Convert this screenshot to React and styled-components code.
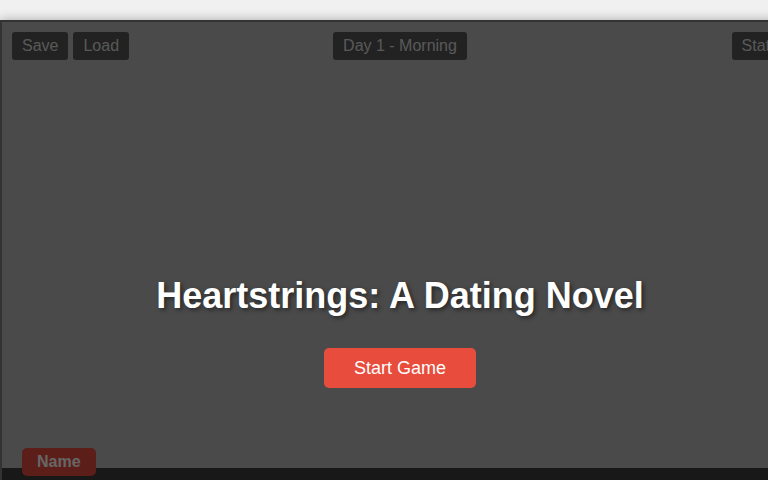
import React from 'react'
import styled, { createGlobalStyle } from 'styled-components'

const GlobalStyle = createGlobalStyle`
  html, body {
    margin: 0;
    padding: 0;
    background: #f0f0f0;
    font-family: "Liberation Sans", Arial, sans-serif;
    overflow: hidden;
  }
`

const Game = styled.div`
  box-sizing: border-box;
  position: relative;
  width: 800px;
  height: 624px;
  margin: 20px auto 0;
  border: 2px solid #333;
  background: #b9b9b9;
  box-shadow: 0 0 10px rgba(0, 0, 0, 0.3);
  display: flex;
  flex-direction: column;
`

const TopBar = styled.div`
  display: grid;
  grid-template-columns: 1fr auto 1fr;
  align-items: center;
  padding: 10px;
`

const Group = styled.div`
  display: flex;
  gap: 5px;
  justify-content: ${p => (p.$end ? 'flex-end' : 'flex-start')};
`

const BarButton = styled.button`
  font-family: inherit;
  font-size: 16px;
  line-height: 18px;
  padding: 5px 10px;
  border: none;
  border-radius: 3px;
  background: #555;
  color: #ddd;
  cursor: pointer;
`

const DayLabel = styled.div`
  font-size: 16px;
  line-height: 18px;
  padding: 5px 10px;
  border-radius: 3px;
  background: #555;
  color: #ddd;
`

const Scene = styled.div`
  flex: 1;
`

const Dialogue = styled.div`
  position: relative;
  height: 174px;
  background: #3c3c3c;
`

const NameTag = styled.div`
  position: absolute;
  top: -20px;
  left: 20px;
  padding: 5px 15px;
  font-size: 16px;
  line-height: 18px;
  font-weight: bold;
  color: #fff;
  background: #e74c3c;
  border-radius: 5px;
`

const Overlay = styled.div`
  position: absolute;
  inset: 0;
  background: rgba(0, 0, 0, 0.6);
  display: flex;
  flex-direction: column;
  align-items: center;
  justify-content: center;
`

const Title = styled.h1`
  margin: 0 0 34px;
  font-size: 36px;
  line-height: 37px;
  font-weight: bold;
  color: #fff;
  text-shadow: 2px 2px 4px rgba(0, 0, 0, 0.5);
`

const StartButton = styled.button`
  font-family: inherit;
  font-size: 18px;
  line-height: 20px;
  padding: 10px 30px;
  border: none;
  border-radius: 5px;
  background: #e74c3c;
  color: #fff;
  cursor: pointer;
`

export default function App() {
  return (
    <>
      <GlobalStyle />
      <Game>
        <TopBar>
          <Group>
            <BarButton>Save</BarButton>
            <BarButton>Load</BarButton>
          </Group>
          <DayLabel>Day 1 - Morning</DayLabel>
          <Group $end>
            <BarButton>Stats</BarButton>
          </Group>
        </TopBar>
        <Scene />
        <Dialogue>
          <NameTag>Name</NameTag>
        </Dialogue>
        <Overlay>
          <Title>Heartstrings: A Dating Novel</Title>
          <StartButton>Start Game</StartButton>
        </Overlay>
      </Game>
    </>
  )
}
